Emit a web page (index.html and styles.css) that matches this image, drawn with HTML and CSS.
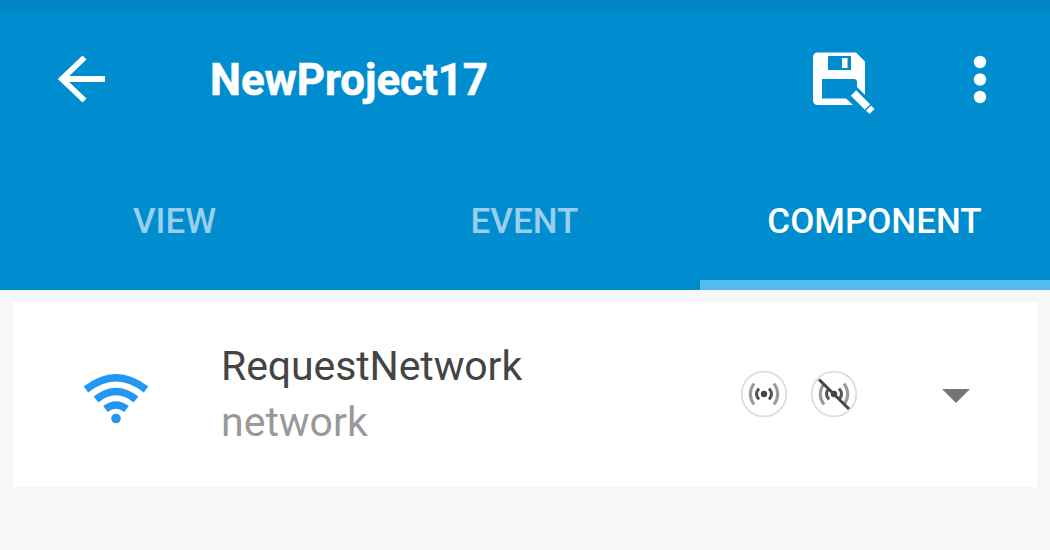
FILE: index.html
```html
<!DOCTYPE html>
<html lang="en">
<head>
  <meta charset="UTF-8">
  <meta name="viewport" content="width=device-width, initial-scale=1.0">
  <title>NewProject17</title>
  <link rel="stylesheet" href="styles.css">
</head>
<body>

  <div class="status-bar"></div>

  <!-- Toolbar -->
  <header class="toolbar">
    <svg class="back-icon" width="50" height="50" viewBox="0 0 50 50">
      <path d="M27.500 3.500L5 25L27.500 46.500M5 25H48" fill="none" stroke="#fff" stroke-width="5.800"/>
    </svg>
    <h1 class="title">NewProject17</h1>
    <svg class="save-icon" width="66" height="66" viewBox="0 0 66 66">
      <path fill="#fff" fill-rule="evenodd" d="M8 2.500H46L55 11.500V45L47 37V31L45 29H12V48.500H36L43 55H8Q3 55 3 50V7.500Q3 2.500 8 2.500ZM18 6V20H41V6Z"/>
      <rect x="32" y="8" width="5.500" height="10" fill="#fff"/>
      <path d="M43.500 43L57.500 57" stroke="#fff" stroke-width="7.500"/>
      <path d="M58.500 58L62 61.500" stroke="#fff" stroke-width="7"/>
    </svg>
    <svg class="more-icon" width="16" height="54" viewBox="0 0 16 54">
      <g fill="#fff">
        <circle cx="8" cy="9" r="6.200"/>
        <circle cx="8" cy="26.500" r="6.200"/>
        <circle cx="8" cy="44" r="6.200"/>
      </g>
    </svg>
  </header>

  <nav class="tabs">
    <div class="tab">VIEW</div>
    <div class="tab">EVENT</div>
    <div class="tab active">COMPONENT</div>
  </nav>

  <!-- Component list -->
  <main class="list">
    <div class="card">
      <svg class="wifi-icon" width="70" height="54" viewBox="0 0 70 54">
        <g fill="none" stroke="#2196f3" stroke-width="7.500">
          <path d="M5 18.500Q35-5 65 18.500"/>
          <path d="M15 28.500Q35 12.500 55 28.500"/>
          <path d="M24.500 38Q35 30 45.500 38"/>
        </g>
        <circle cx="35" cy="47.500" r="4.800" fill="#2196f3"/>
      </svg>
      <div class="info">
        <div class="name">RequestNetwork</div>
        <div class="type">network</div>
      </div>
      <div class="events">
        <svg width="48" height="48" viewBox="0 0 48 48">
          <circle cx="24" cy="24" r="22.300" fill="#fff" stroke="#dcdcdc" stroke-width="1.800"/>
          <circle cx="24" cy="24" r="3.200" fill="#444"/>
          <g fill="none" stroke-width="3">
            <path d="M19 18.500Q14 24 19 29.500M29 18.500Q34 24 29 29.500" stroke="#555"/>
            <path d="M14 13.500Q6.500 24 14 34.500M34 13.500Q41.500 24 34 34.500" stroke="#999"/>
          </g>
        </svg>
        <svg width="48" height="48" viewBox="0 0 48 48">
          <circle cx="24" cy="24" r="22.300" fill="#fff" stroke="#dcdcdc" stroke-width="1.800"/>
          <circle cx="24" cy="24" r="3.200" fill="#444"/>
          <g fill="none" stroke-width="3">
            <path d="M19 18.500Q14 24 19 29.500M29 18.500Q34 24 29 29.500" stroke="#555"/>
            <path d="M14 13.500Q6.500 24 14 34.500M34 13.500Q41.500 24 34 34.500" stroke="#999"/>
          </g>
          <path d="M9 9.500L39 39" stroke="#444" stroke-width="3"/>
        </svg>
      </div>
      <svg class="arrow-icon" width="30" height="16" viewBox="0 0 30 16">
        <path d="M1 1H29L15 15Z" fill="#757575"/>
      </svg>
    </div>
  </main>

</body>
</html>
```

FILE: styles.css
```css
body {
  font-family: Roboto, sans-serif;
  margin: 0;
  height: 550px;
  background-color: #f7f7f7;
  overflow: hidden;
}
.status-bar {
  height: 11px;
  background: #0084c7;
}
.toolbar {
  display: flex;
  align-items: center;
  box-sizing: border-box;
  height: 137px;
  padding: 0 62px 0 57px;
  background: #008dcf;
}
.back-icon {
  margin-bottom: 1px;
}
.title {
  flex: 1;
  margin: 0 0 0 103px;
  font-size: 43.800px;
  line-height: 50px;
  font-weight: bold;
  color: #fff;
  -webkit-text-stroke: 0.600px #fff;
}
.save-icon {
  margin-right: 96px;
  margin-top: 6px;
}
.more-icon {
  margin-top: 1px;
}
.tabs {
  display: flex;
  height: 142px;
  background: #008dcf;
}
.tab {
  flex: 1;
  box-sizing: border-box;
  padding-top: 53px;
  padding-right: 1px;
  border-bottom: 10px solid transparent;
  text-align: center;
  font-size: 35px;
  line-height: 41px;
  font-weight: 500;
  color: #99ceec;
}
.tab.active {
  border-bottom-color: #52bcee;
  color: #fff;
}
.list {
  padding: 12px 13px;
}
.card {
  display: flex;
  align-items: center;
  box-sizing: border-box;
  height: 185px;
  padding: 0 66px 2px 68px;
  background: #fff;
}
.wifi-icon {
  margin-top: 8px;
}
.info {
  flex: 1;
  margin-left: 70px;
  font-size: 41px;
  line-height: 56px;
}
.name {
  color: #444;
  letter-spacing: -0.100px;
}
.type {
  color: #999;
}
.events {
  display: flex;
  gap: 22px;
  margin-right: 83px;
}
.arrow-icon {
  margin-top: 4px;
}
```
